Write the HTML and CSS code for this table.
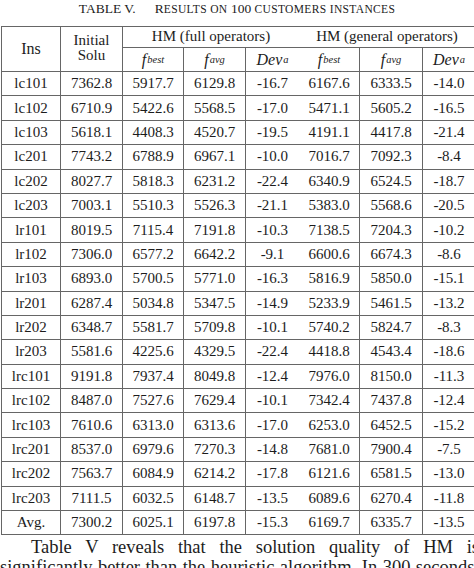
FILE: index.html
```html
<!DOCTYPE html>
<html lang="en">
<head>
<meta charset="utf-8">
<title>Table V</title>
<link rel="stylesheet" href="styles.css">
</head>
<body>
<div class="page">
  <div class="title"><span>TABLE V.</span><span class="sub-title">R<span class="sm">ESULTS ON</span> 100 <span class="sm">CUSTOMERS INSTANCES</span></span></div>
  <div class="grid">
    <div class="c h ins">Ins</div>
    <div class="c h init">Initial<br>Solu</div>
    <div class="c h grp nr">HM (full operators)</div>
    <div class="c h grp nr">HM (general operators)</div>
    <div class="c h2"><i>f</i><sub>best</sub></div>
    <div class="c h2"><i>f</i><sub>avg</sub></div>
    <div class="c h2 nr"><i>Dev</i><sub>a</sub></div>
    <div class="c h2"><i>f</i><sub>best</sub></div>
    <div class="c h2"><i>f</i><sub>avg</sub></div>
    <div class="c h2 nr"><i>Dev</i><sub>a</sub></div>

    <div class="r"><div>lc101</div><div>7362.8</div><div>5917.7</div><div>6129.8</div><div>-16.7</div><div>6167.6</div><div>6333.5</div><div>-14.0</div></div>
    <div class="r"><div>lc102</div><div>6710.9</div><div>5422.6</div><div>5568.5</div><div>-17.0</div><div>5471.1</div><div>5605.2</div><div>-16.5</div></div>
    <div class="r"><div>lc103</div><div>5618.1</div><div>4408.3</div><div>4520.7</div><div>-19.5</div><div>4191.1</div><div>4417.8</div><div>-21.4</div></div>
    <div class="r"><div>lc201</div><div>7743.2</div><div>6788.9</div><div>6967.1</div><div>-10.0</div><div>7016.7</div><div>7092.3</div><div>-8.4</div></div>
    <div class="r"><div>lc202</div><div>8027.7</div><div>5818.3</div><div>6231.2</div><div>-22.4</div><div>6340.9</div><div>6524.5</div><div>-18.7</div></div>
    <div class="r"><div>lc203</div><div>7003.1</div><div>5510.3</div><div>5526.3</div><div>-21.1</div><div>5383.0</div><div>5568.6</div><div>-20.5</div></div>
    <div class="r"><div>lr101</div><div>8019.5</div><div>7115.4</div><div>7191.8</div><div>-10.3</div><div>7138.5</div><div>7204.3</div><div>-10.2</div></div>
    <div class="r"><div>lr102</div><div>7306.0</div><div>6577.2</div><div>6642.2</div><div>-9.1</div><div>6600.6</div><div>6674.3</div><div>-8.6</div></div>
    <div class="r"><div>lr103</div><div>6893.0</div><div>5700.5</div><div>5771.0</div><div>-16.3</div><div>5816.9</div><div>5850.0</div><div>-15.1</div></div>
    <div class="r"><div>lr201</div><div>6287.4</div><div>5034.8</div><div>5347.5</div><div>-14.9</div><div>5233.9</div><div>5461.5</div><div>-13.2</div></div>
    <div class="r"><div>lr202</div><div>6348.7</div><div>5581.7</div><div>5709.8</div><div>-10.1</div><div>5740.2</div><div>5824.7</div><div>-8.3</div></div>
    <div class="r"><div>lr203</div><div>5581.6</div><div>4225.6</div><div>4329.5</div><div>-22.4</div><div>4418.8</div><div>4543.4</div><div>-18.6</div></div>
    <div class="r"><div>lrc101</div><div>9191.8</div><div>7937.4</div><div>8049.8</div><div>-12.4</div><div>7976.0</div><div>8150.0</div><div>-11.3</div></div>
    <div class="r"><div>lrc102</div><div>8487.0</div><div>7527.6</div><div>7629.4</div><div>-10.1</div><div>7342.4</div><div>7437.8</div><div>-12.4</div></div>
    <div class="r"><div>lrc103</div><div>7610.6</div><div>6313.0</div><div>6313.6</div><div>-17.0</div><div>6253.0</div><div>6452.5</div><div>-15.2</div></div>
    <div class="r"><div>lrc201</div><div>8537.0</div><div>6979.6</div><div>7270.3</div><div>-14.8</div><div>7681.0</div><div>7900.4</div><div>-7.5</div></div>
    <div class="r"><div>lrc202</div><div>7563.7</div><div>6084.9</div><div>6214.2</div><div>-17.8</div><div>6121.6</div><div>6581.5</div><div>-13.0</div></div>
    <div class="r"><div>lrc203</div><div>7111.5</div><div>6032.5</div><div>6148.7</div><div>-13.5</div><div>6089.6</div><div>6270.4</div><div>-11.8</div></div>
    <div class="r"><div>Avg.</div><div>7300.2</div><div>6025.1</div><div>6197.8</div><div>-15.3</div><div>6169.7</div><div>6335.7</div><div>-13.5</div></div>
  </div>
  <p class="text">Table V reveals that the solution quality of HM is significantly better than the heuristic algorithm. In 300 seconds, HM obtains better solutions than the initial heuristic on all of the instances tested.</p>
</div>
</body>
</html>
```
FILE: styles.css
```css
html, body {
  margin: 0;
  padding: 0;
  background: #ffffff;
}

body {
  width: 474px;
  height: 568px;
  overflow: hidden;
  font-family: "Liberation Serif", "Times New Roman", serif;
  color: #1c1c1c;
}

.page {
  width: 474px;
}

.title {
  height: 26px;
  line-height: 17px;
  font-size: 13.5px;
  text-align: center;
  white-space: nowrap;
}

.title .sub-title {
  padding-left: 19px;
}

.title .sm {
  font-size: 11.5px;
  letter-spacing: 0.35px;
}

.grid {
  display: grid;
  grid-template-columns: 59px 62px 61px 62px 53px 61px 63px 52px;
  grid-template-rows: 21px 24px repeat(19, 24.4px);
  margin-left: 1px;
  width: 474px;
  border-top: 1px solid #666;
  border-left: 1px solid #666;
  font-size: 15px;
}

.r {
  display: contents;
}

.c,
.r > div {
  box-sizing: border-box;
  display: flex;
  align-items: center;
  justify-content: center;
  border-right: 1px solid #666;
  border-bottom: 1px solid #666;
  white-space: nowrap;
}

.r > div:nth-child(5),
.r > div:nth-child(8),
.nr {
  border-right: none;
}

.h {
  font-size: 15px;
}

.ins {
  grid-row: 1 / 3;
  grid-column: 1;
  font-size: 16px;
}

.init {
  grid-row: 1 / 3;
  grid-column: 2;
  text-align: center;
  line-height: 15px;
  padding-bottom: 2px;
}

.grp {
  grid-column: span 3;
  padding-bottom: 2px;
}

.h2 {
  font-size: 16px;
  padding-top: 1px;
}

.h2 i {
  font-style: italic;
}

.h2 sub {
  font-style: italic;
  font-size: 10.5px;
  line-height: 0;
  vertical-align: -4px;
  margin-left: 1px;
}

.text {
  margin: 2px 0 0 0;
  width: 479px;
  font-size: 18.5px;
  line-height: 20px;
  text-align: justify;
  text-indent: 31px;
}
```
